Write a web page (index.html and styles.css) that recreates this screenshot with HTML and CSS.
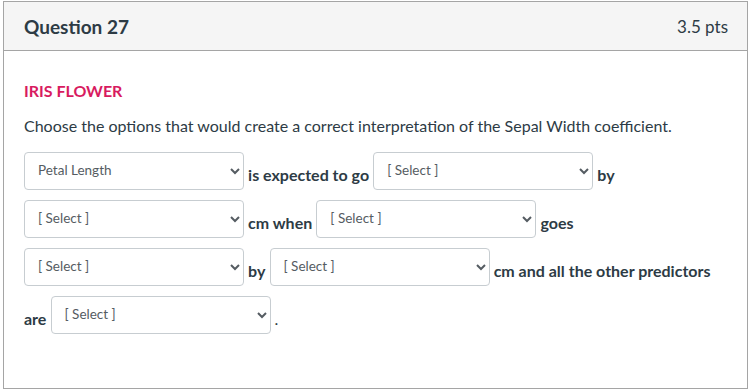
FILE: index.html
```html
<!DOCTYPE html>
<html lang="en">
<head>
    <meta charset="UTF-8">
    <meta name="viewport" content="width=device-width, initial-scale=1.0">
    <title>Question 27</title>

    <link rel="stylesheet" href="styles.css">
</head>
<body>

<div class="question">
  <div class="question-header">
    <span class="question-name">Question 27</span>
    <span class="question-points">3.5 pts</span>
  </div>

  <div class="question-text">
    <p class="question-title">IRIS FLOWER</p>
    <p class="question-prompt">Choose the options that would create a correct interpretation of the Sepal Width coefficient.</p>

    <p class="question-blanks">
      <select class="blank"><option>Petal Length</option></select>
      <strong>is expected to go</strong>
      <select class="blank"><option>[ Select ]</option></select>
      <strong>by</strong>
      <select class="blank"><option>[ Select ]</option></select>
      <strong>cm when</strong>
      <select class="blank"><option>[ Select ]</option></select>
      <strong>goes</strong>
      <select class="blank"><option>[ Select ]</option></select>
      <strong>by</strong>
      <select class="blank"><option>[ Select ]</option></select>
      <strong>cm and all the other predictors are</strong>
      <select class="blank"><option>[ Select ]</option></select> .
    </p>
  </div>
</div>

</body>
</html>
```

FILE: styles.css
```css
/*CSS RESETS*/

body {
    margin: 0;
    padding: 1px 2px 0 3px;
    font-family: "Lato", "Open Sans", sans-serif;
    color: #2d3b45;
}

p {
    margin: 0;
}


/*CSS START*/

.question {
    height: 388px;
    border: 1px solid #a5a5a5;
    box-sizing: border-box;
}

.question-header {
    display: flex;
    justify-content: space-between;
    align-items: center;
    height: 48px;
    padding: 0 19px 0 20px;
    background-color: #f5f5f5;
    border-bottom: 1px solid #a5a5a5;
}

.question-name {
    font-size: 19px;
    font-weight: bold;
}

.question-points {
    font-size: 17px;
}

.question-text {
    padding: 30px 20px 0 20px;
}

.question-title {
    color: #d81b60;
    font-size: 16px;
    font-weight: bold;
    margin-bottom: 16px;
}

.question-prompt {
    font-size: 16px;
    margin-bottom: 16px;
}

.question-blanks {
    font-size: 16px;
    line-height: 48px;
}

.question-blanks strong {
    font-weight: bold;
}

.blank {
    width: 220px;
    height: 38px;
    padding: 0 8px 2px 9px;
    vertical-align: middle;
    font-family: "Lato", "Open Sans", sans-serif;
    font-size: 13.5px;
    color: #555c62;
    background-color: #fff;
    border: 1px solid #c7cdd1;
    border-radius: 4px;
    margin-top: -3px;
    margin-bottom: 8px;
}
```
